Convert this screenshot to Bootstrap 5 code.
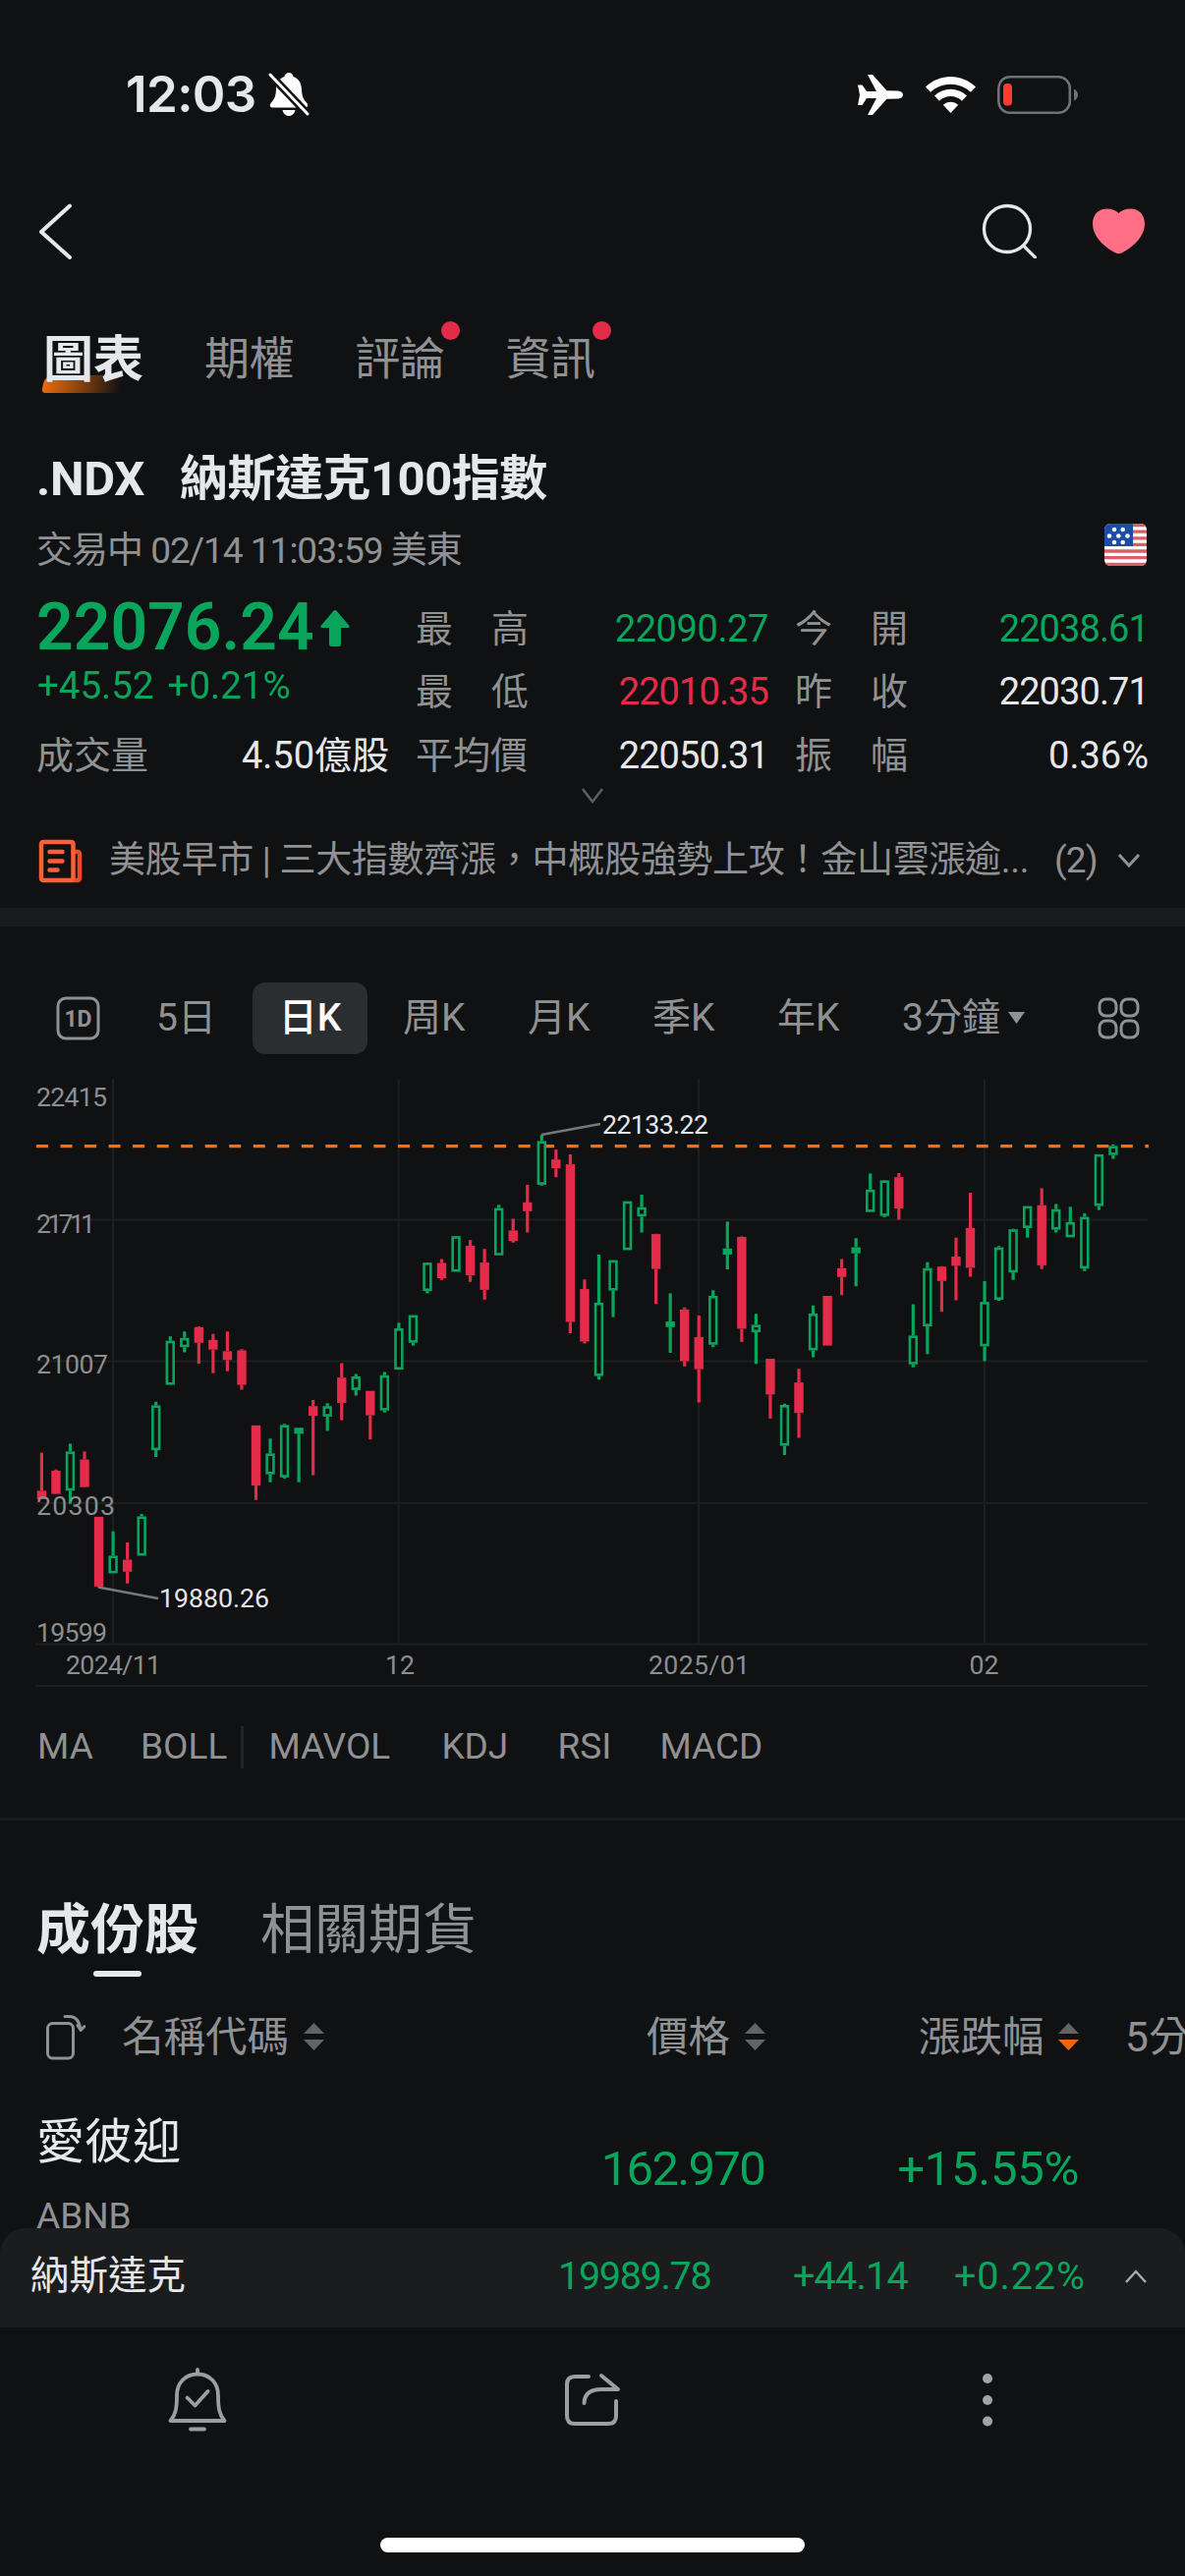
<!DOCTYPE html>
<html lang="zh-Hant">
<head>
<meta charset="utf-8">
<meta name="viewport" content="width=device-width, initial-scale=1">
<title>.NDX 納斯達克100指數</title>
<link rel="stylesheet" href="https://cdn.jsdelivr.net/npm/bootstrap@5.3.0/dist/css/bootstrap.min.css">
<style>
  :root{--bg:#101113;--fg:#e6e7ea;--dim:#909193;--up:#0aa55d;--down:#e42c4a;--line:#1c1d1f}
  html,body{margin:0;background:var(--bg)}
  body{width:1206px;height:2622px;overflow:hidden;color:var(--fg);font-family:Roboto,"Noto Sans CJK TC",sans-serif;font-size:37px;line-height:1.2}
  svg{display:block;flex:none}
  span,a{white-space:nowrap;flex:none}
  .dim{color:var(--dim)} .up{color:var(--up)} .down{color:var(--down)}
  .statusbar{height:180px;padding:12px 109px 0 128px}
  .clock{font-family:Inter,sans-serif;font-weight:600;font-size:51px;letter-spacing:-.6px;width:145px}
  .i-wifi{margin-left:23px} .i-batt{margin-left:22px} .i-heart{margin-left:57px}
  .topnav{height:110px;padding:0 41px 0 38px}
  .maintabs{height:150px;padding:0 0 0 44px}
  .maintabs .nav-link{padding:0;font-size:46px;color:var(--dim);position:relative;line-height:60px;letter-spacing:-.4px;margin-right:62px}
  .maintabs .nav-link.active{font-size:51px;font-weight:700;color:var(--fg);margin-right:62px;background:none;letter-spacing:0;top:2px}
  .maintabs .nav-link.active::before{content:"";position:absolute;z-index:-1;left:0;bottom:-3px;width:80px;height:18px;border-radius:8px 0 0 4px;background:linear-gradient(90deg,#ea6a0e,#8d440e 45%,transparent);transform:skewX(-12deg)}
  .dot{position:absolute;width:19px;height:19px;border-radius:50%;background:var(--down);top:-8px;right:-16px}
  .symbol{height:94px;padding:2px 37px 0;font-weight:700;font-size:49px;letter-spacing:-.5px}
  .symbol .code{width:146px;font-size:49px;letter-spacing:-.3px}
  .session{height:52px;padding:0 39px 0 37px;font-size:37px;margin-bottom:22px}
  .session .when{letter-spacing:-1px;padding-top:2px}
  .session .flag{margin-top:-11px}
  .quote{height:190px;padding:0 37px 0 37px;display:grid;grid-template-columns:359px 359px 360px;column-gap:27px;grid-template-rows:64.7px 64.7px 64.7px;align-items:center;font-size:38px}
  .quote .val{letter-spacing:-.4px}
  .lbl{width:115px;display:flex;justify-content:space-between;color:var(--dim)}
  .last{grid-row:1/3;align-self:stretch}
  .price{font-size:66px;font-weight:600;line-height:70px;margin-top:-4px}
  .price svg{margin-left:6px}
  .chg{font-size:38.5px;line-height:44px;margin-top:2px;padding-left:1px}
  .chg span{margin-left:14px}
  .more{height:30px}
  .newsline{height:96px;padding:0 45px 0 39px;font-size:37px}
  .newsline .txt{width:962px;margin-left:27px;letter-spacing:-.28px}
  .newsline .cnt{letter-spacing:-.8px}
  .band{height:19px;background:#1a1b1d}
  .periods{height:155px;padding:57px 46px 0 57px;font-size:39px;color:var(--dim)}
  .p5{margin:0 0 0 57px;width:98px}
  .pk{width:127px}
  .on{width:117px;height:73px;border-radius:13px;background:#2b2e31;color:#fff;font-weight:500;display:flex;align-items:center;justify-content:center;margin-right:36px}
  .i-caret{margin-left:8px}
  .chart{height:620px}
  .chart text{font-size:26.7px;fill:#8d8e90}
  .chart .peak{fill:var(--fg)}
  .indicators{height:135px;padding:0 38px 12px;border-bottom:3px solid var(--line);font-size:37px;color:var(--dim)}
  .i1{width:105px}.i2{width:176px}.i3{width:118px}.i4{width:104px}
  .vsep{width:3px;height:43px;background:#242527;margin:0 25px 0 14px}
  .subtabs{height:182px;padding:40px 0 0 37px;font-size:55px}
  .subtabs .cur{font-weight:700;position:relative;margin-right:63px}
  .subtabs .cur::after{content:"";position:absolute;left:58px;bottom:-15px;width:49px;height:6px;border-radius:3px;background:var(--fg)}
  .thead-row{height:76px;font-size:42.5px;color:var(--dim)}
  .i-rot{margin-left:45px}
  .h1c{margin-left:37px;width:184px}.h2c{margin-left:327px;width:99px}.h3c{margin-left:155px;width:141px}.h4c{margin-left:46px}
  .stock{height:157px;padding-left:37px}
  .stock .who{width:500px;padding-top:33px}
  .stock .nm{font-size:49px;line-height:74px;height:74px}
  .stock .tk{font-size:37px;line-height:44px;margin-top:16px}
  .stock .num{font-size:49px;padding-top:37px}
  .n1{width:241px;letter-spacing:-1.7px}.n2{width:320px;letter-spacing:-.3px}
  .ticker{height:101px;background:#1b1c1e;border-radius:26px 26px 0 0;padding:0 38px 3px 31px;position:relative;font-size:39.5px}
  .t1{width:537px}.t2{width:239px;letter-spacing:-1.3px}.t3{width:164px;letter-spacing:-.8px}.t4{letter-spacing:.9px}
  .toolbar-b{height:147px}
  .home{width:432px;height:15px;border-radius:8px;background:#fff;margin:67px auto 0}
</style>
<script src="https://cdn.jsdelivr.net/npm/bootstrap@5.3.0/dist/js/bootstrap.bundle.min.js"></script>
</head>
<body>
<header>
  <div class="statusbar d-flex align-items-center">
    <span class="clock">12:03</span>
    <svg width="42" height="46" viewBox="0 0 42 46"><path fill="#fff" d="M21 1c-2.500 0-4.300 1.700-4.600 4C11 7 8.300 11.500 8 18c-.3 7-1.500 9.500-5 13.500-2.300 2.700-1.200 5 1.500 5h33c2.700 0 3.800-2.300 1.500-5-3.500-4-4.700-6.500-5-13.500C33.700 11.500 31 7 25.600 5 25.300 2.700 23.500 1 21 1zM14.500 39c.8 3.600 3.300 6 6.500 6s5.700-2.400 6.500-6z"/><path stroke="#101113" stroke-width="8" d="M1 2l40 42"/><path stroke="#fff" stroke-width="3" stroke-linecap="round" d="M2 3l38 40"/></svg>
    <svg class="ms-auto" width="46" height="41" viewBox="0 0 46 41"><path fill="#fff" d="M0 10.500h4.500L9 17h10L10 0h5l14.500 16.300L41 16.500c3 .3 5 1.800 5 4s-2 3.700-5 4l-11.500.2L15 41h-5l9-17H9l-4.500 7H0l2-10.500z"/></svg>
    <svg class="i-wifi" width="51" height="37" viewBox="0 0 51 37"><g fill="#fff"><path d="M0 10.500C14.500-3.500 36.500-3.500 51 10.500l-5 5.200C34.500 5 16.500 5 5 15.700z"/><path d="M9 19.500c9.500-9 23.500-9 33 0l-5 5.200c-6.500-6.200-16.500-6.200-23 0z"/><path d="M17.800 28.800c4.500-4 11-4 15.400 0L25.500 37z"/></g></svg>
    <svg class="i-batt" width="82" height="39" viewBox="0 0 82 39"><rect x="1.300" y="1.300" width="72.500" height="36.400" rx="11.500" fill="none" stroke="#707173" stroke-width="2.600"/><rect x="6" y="8" width="9" height="22.500" rx="4" fill="#ff3b30"/><path fill="#707173" d="M78 13.500q4 2 4 6t-4 6z"/></svg>
  </div>
  <nav class="topnav d-flex align-items-center">
    <svg width="36" height="58" viewBox="0 0 36 58"><path d="M33 3.500L4 30l29 26" fill="none" stroke="#e6e7ea" stroke-width="4" stroke-linecap="round" stroke-linejoin="round"/></svg>
    <svg class="ms-auto" width="56" height="56" viewBox="0 0 56 56"><g fill="none" stroke="#e6e7ea" stroke-width="3.300" stroke-linecap="round"><circle cx="26" cy="26" r="23.500"/><path d="M42.500 43l12 12"/></g></svg>
    <svg class="i-heart" width="53" height="46" viewBox="0 0 53 46"><path fill="#ff7087" d="M26.500 5C19-2.500 0-1.500 0 16c0 12 11 23 22.500 29 3 1.400 5 1.400 8 0C42 39 53 28 53 16 53-1.500 34-2.500 26.500 5z"/></svg>
  </nav>
  <nav class="maintabs nav d-flex align-items-center flex-nowrap position-relative z-0">
    <a class="nav-link active">圖表</a>
    <a class="nav-link">期權</a>
    <a class="nav-link">評論<i class="dot"></i></a>
    <a class="nav-link">資訊<i class="dot"></i></a>
  </nav>
</header>
<main>
  <section>
    <div class="symbol d-flex align-items-center"><span class="code">.NDX</span><span>納斯達克100指數</span></div>
    <div class="session d-flex align-items-center justify-content-between dim"><span class="when">交易中 02/14 11:03:59 美東</span>
      <svg class="flag" width="43" height="43" viewBox="0 0 43 43"><defs><clipPath id="fr"><rect width="43" height="43" rx="6"/></clipPath></defs><g clip-path="url(#fr)"><rect width="43" height="43" fill="#fff"/><path stroke="#d95f64" stroke-width="3.300" d="M0 1.600h43M0 8.200h43M0 14.800h43M0 21.400h43M0 28h43M0 34.700h43M0 41.300h43"/><rect width="29" height="23" fill="#1d4ba5"/><g fill="#fff"><circle cx="10" cy="6" r="2.300"/><circle cx="18.700" cy="6" r="2.300"/><circle cx="5" cy="12.500" r="2.300"/><circle cx="14.300" cy="12.500" r="2.300"/><circle cx="23.500" cy="12.500" r="2.300"/><circle cx="10" cy="19" r="2.300"/><circle cx="18.700" cy="19" r="2.300"/></g></g></svg>
    </div>
    <div class="quote">
      <div class="last up">
        <div class="price d-flex align-items-center"><span>22076.24</span><svg width="30" height="37" viewBox="0 0 30 37"><path fill="#0aa55d" d="M13.500.8q1.500-1.400 3 0L29.500 16q1 2-1.500 2h-7v16.500q0 2.500-2.500 2.500h-7Q9 37 9 34.500V18H2Q-.5 18 .5 16z"/></svg></div>
        <div class="chg">+45.52<span>+0.21%</span></div>
      </div>
      <div class="d-flex justify-content-between"><span class="lbl"><b class="fw-normal">最</b><b class="fw-normal">高</b></span><span class="val up">22090.27</span></div>
      <div class="d-flex justify-content-between"><span class="lbl"><b class="fw-normal">今</b><b class="fw-normal">開</b></span><span class="val up" style="letter-spacing:-.9px">22038.61</span></div>
      <div class="d-flex justify-content-between"><span class="lbl"><b class="fw-normal">最</b><b class="fw-normal">低</b></span><span class="val down" style="letter-spacing:-.9px">22010.35</span></div>
      <div class="d-flex justify-content-between"><span class="lbl"><b class="fw-normal">昨</b><b class="fw-normal">收</b></span><span class="val" style="letter-spacing:-.9px">22030.71</span></div>
      <div class="d-flex justify-content-between"><span class="lbl">成交量</span><span>4.50億股</span></div>
      <div class="d-flex justify-content-between"><span class="lbl">平均價</span><span class="val" style="letter-spacing:-.9px">22050.31</span></div>
      <div class="d-flex justify-content-between"><span class="lbl"><b class="fw-normal">振</b><b class="fw-normal">幅</b></span><span>0.36%</span></div>
    </div>
    <div class="more d-flex justify-content-center pt-1"><svg width="24" height="16" viewBox="0 0 24 16"><path d="M2 1l10 13L22 1" fill="none" stroke="#5c5d5f" stroke-width="2.600"/></svg></div>
    <div class="newsline d-flex align-items-center dim">
      <svg width="45" height="45" viewBox="0 0 45 45"><g fill="none" stroke="#fa6037" stroke-width="4.500" stroke-linejoin="round" stroke-linecap="round"><path d="M35.500 13H40a2 2 0 0 1 2 2v25a2 2 0 0 1-2 2h-5" stroke="#ee4a22"/><rect x="3" y="3" width="32.500" height="39" rx="2"/><path d="M11.500 13h13M11.500 22.500h13M11.500 31.500h8"/></g></svg>
      <span class="txt">美股早市 | 三大指數齊漲，中概股強勢上攻！金山雲漲逾...</span><span class="cnt">(2)</span>
      <svg class="ms-auto" width="24" height="16" viewBox="0 0 24 16"><path d="M2 2l10 11L22 2" fill="none" stroke="#909193" stroke-width="3"/></svg>
    </div>
  </section>
  <div class="band"></div>
  <section>
    <div class="periods">
      <div class="d-flex align-items-center">
      <svg width="45" height="45" viewBox="0 0 45 45"><rect x="2" y="2" width="41" height="41" rx="8" fill="none" stroke="#909193" stroke-width="3"/><text x="22.500" y="30.500" font-size="23" font-weight="700" text-anchor="middle" fill="#909193">1D</text></svg>
      <span class="p5">5日</span><span class="on">日K</span><span class="pk">周K</span><span class="pk">月K</span><span class="pk">季K</span><span class="pk">年K</span>
      <span class="d-flex align-items-center">3分鐘<svg class="i-caret" width="17" height="13" viewBox="0 0 17 13"><path fill="#909193" d="M0 0h17l-8.500 12z"/></svg></span>
      <svg class="ms-auto" width="43" height="43" viewBox="0 0 43 43"><g fill="none" stroke="#909193" stroke-width="3"><rect x="2" y="2" width="17" height="17" rx="6.500"/><rect x="24" y="2" width="17" height="17" rx="6.500"/><rect x="2" y="24" width="17" height="17" rx="6.500"/><rect x="24" y="24" width="17" height="17" rx="6.500"/></g></svg>
      </div>
    </div>
    <div class="chart">
      <svg width="1206" height="620" viewBox="0 1098 1206 620">
        <path stroke="#1d1e20" stroke-width="2" d="M115 1098v576M405.700 1098v576M711 1098v576M1002 1098v576M36 1241.500h1132M36 1385.500h1132M36 1530h1132M36 1673.500h1132M36 1716h1132"/>
        <path stroke="#ff6d0a" stroke-width="3.200" stroke-dasharray="12 12.530" d="M37 1166.700h1132"/>
        <g id="candles"></g>
        <path stroke="#77787a" stroke-width="2.600" d="M551 1155l60-11M100 1615.500l61 11.500"/>
        <text x="37" y="1125.500" textLength="72">22415</text>
        <text x="37" y="1254.500" textLength="60">21711</text>
        <text x="37" y="1398" textLength="73">21007</text>
        <text x="37" y="1541.500" textLength="80">20303</text>
        <text x="37" y="1671" textLength="72">19599</text>
        <text x="67" y="1704" textLength="97">2024/11</text>
        <text x="392" y="1704">12</text>
        <text x="660" y="1704" textLength="103">2025/01</text>
        <text x="986.500" y="1704">02</text>
        <text x="613" y="1154" textLength="108" class="peak">22133.22</text>
        <text x="162" y="1635.500" textLength="112" class="peak">19880.26</text>
      </svg>
    </div>
    <div class="indicators d-flex align-items-center">
      <span class="i1">MA</span><span>BOLL</span><i class="vsep"></i><span class="i2">MAVOL</span><span class="i3">KDJ</span><span class="i4">RSI</span><span>MACD</span>
    </div>
  </section>
  <section>
    <div class="subtabs d-flex align-items-center"><span class="cur">成份股</span><span class="dim">相關期貨</span></div>
    <div class="thead-row d-flex align-items-center">
      <svg class="i-rot" width="42" height="48" viewBox="0 0 42 48"><g fill="none" stroke="#909193" stroke-width="3" stroke-linejoin="round" stroke-linecap="round"><rect x="3.500" y="10.500" width="26" height="35.500" rx="5"/><path d="M21 3.500h4.500q10 0 11.500 14M34 12.500l3.200 5L41 13.500"/></g></svg>
      <span class="h1c">名稱代碼</span>
      <svg width="23" height="28" viewBox="0 0 23 28"><path fill="#626365" d="M1 11L11.500 0 22 11zM1 17h21L11.500 28z"/></svg>
      <span class="h2c">價格</span>
      <svg width="23" height="28" viewBox="0 0 23 28"><path fill="#626365" d="M1 11L11.500 0 22 11zM1 17h21L11.500 28z"/></svg>
      <span class="h3c">漲跌幅</span>
      <svg width="23" height="28" viewBox="0 0 23 28"><path fill="#626365" d="M1 11L11.500 0 22 11z"/><path fill="#f3640f" d="M1 17h21L11.500 28z"/></svg>
      <span class="h4c">5分</span>
    </div>
    <div class="stock d-flex">
      <div class="who"><div class="nm">愛彼迎</div><div class="tk dim">ABNB</div></div>
      <div class="num n1 up d-flex align-items-center justify-content-end">162.970</div>
      <div class="num n2 up d-flex align-items-center justify-content-end">+15.55%</div>
    </div>
  </section>
</main>
<footer>
  <div class="ticker d-flex align-items-center">
    <span class="t1">納斯達克</span><span class="t2 up">19989.78</span><span class="t3 up">+44.14</span><span class="t4 up">+0.22%</span>
    <svg class="ms-auto" width="24" height="14" viewBox="0 0 24 14"><path d="M2 13L12 2l10 11" fill="none" stroke="#a9aaac" stroke-width="2.400"/></svg>
  </div>
  <div class="toolbar-b row g-0 align-items-center">
    <div class="col-4 d-flex justify-content-center"><svg width="60" height="66" viewBox="0 0 60 66"><g fill="none" stroke="#9d9ea0" stroke-width="3.800" stroke-linecap="round" stroke-linejoin="round"><path d="M30 2v4M30 6.500c-13 0-21 9.500-21 21.500 0 14-1.500 20-6.500 26h55C52.500 48 51 42 51 28 51 16 43 6.500 30 6.500z"/><path d="M19.500 30.500l8 8 13-14.500M23 62.500h14"/></g></svg></div>
    <div class="col-4 d-flex justify-content-center"><svg width="58" height="56" viewBox="0 0 58 56"><g fill="none" stroke="#9d9ea0" stroke-width="4" stroke-linecap="round" stroke-linejoin="round"><path d="M25 4H11q-8 0-8 8v32q0 8 8 8h34q8 0 8-8V29"/><path d="M38 3l17 14H38q-17 0-17.500 14"/></g></svg></div>
    <div class="col-4 d-flex justify-content-center"><svg width="12" height="56" viewBox="0 0 12 56"><g fill="#a3a4a6"><circle cx="6" cy="6" r="5"/><circle cx="6" cy="28" r="5"/><circle cx="6" cy="49.500" r="5"/></g></svg></div>
  </div>
  <div class="home"></div>
</footer>
<script>
  // Daily candles: direction, high, body top, body bottom, low (chart units below the top edge)
  const days = `r952,1047,1068,1068 r994,997,1055,1055 g930,949,1047,1080 r949,969,1038,1038 r1112,1112,1286,1288 g1148,1209,1253,1253 r1176,1219,1249,1278 g1105,1111,1209,1209 g825,834,946,963 g662,673,783,783 g650,666,689,702 r637,639,678,730 r656,671,695,754 r650,699,721,749 r694,697,783,795 r884,884,1034,1070 g917,954,1006,1026 g880,883,1014,1017 g890,890,905,1026 r821,836,860,1008 g829,836,862,898 r729,765,828,871 g756,762,796,810 r798,798,859,919 g751,759,847,852 g628,642,745,745 g609,609,678,685 g478,478,549,555 r469,479,517,521 g412,412,501,501 r422,436,510,526 r444,478,546,570 g334,342,460,460 r369,398,424,428 r284,328,350,403 g160,175,284,286 r196,221,243,265 r208,233,626,654 r520,544,675,680 g458,578,761,770 g472,472,548,614 g325,325,447,447 g309,340,363,403 r406,407,494,581 g555,625,639,703 r590,595,724,737 r610,664,744,827 g547,561,683,689 g376,443,458,495 r413,414,643,676 g606,633,652,731 r718,718,807,867 g830,833,935,958 r743,777,853,915 g585,605,697,714 r561,561,685,685 r469,492,514,559 g417,440,455,537 g256,296,352,352 g272,273,362,365 r255,265,343,371 g582,660,732,739 g477,492,637,706 r487,488,524,601 r416,463,486,572 r304,392,491,513 g524,576,687,724 g437,440,571,573 g394,395,503,521 g337,337,392,416 r293,335,485,494 g332,345,396,403 g339,377,415,415 g355,364,493,499 g208,208,337,347 g183,187,210,219`.split(' ');
  document.getElementById('candles').innerHTML = days.map((d, i) => {
    const x = 42.4 + i * 14.54, [h, t, b, l] = d.slice(1).split(',').map(v => 1090 + v / 2.45);
    const up = d[0] === 'g', c = up ? '#0aa55d' : '#e42c4a';
    const wick = `<path stroke="${c}" stroke-width="3.200" d="M${x} ${h}V${t}M${x} ${b}V${l}"/>`;
    return wick + (up && b - t > 6.5
      ? `<rect x="${x - 3.4}" y="${t + 1.3}" width="6.800" height="${b - t - 2.6}" fill="#101113" stroke="${c}" stroke-width="2.600"/>`
      : `<rect x="${x - 4.7}" y="${t}" width="9.400" height="${b - t}" fill="${c}"/>`);
  }).join('');
</script>
</body>
</html>
